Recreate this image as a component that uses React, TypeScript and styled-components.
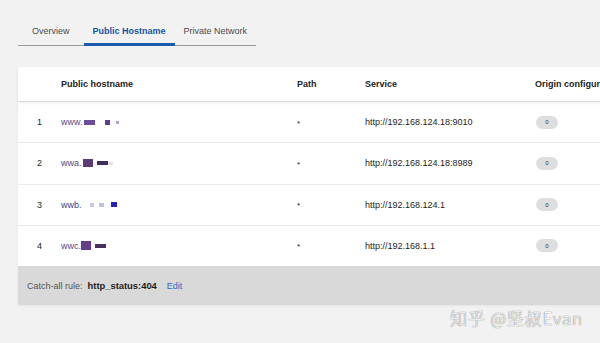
import React from "react";
import styled, { createGlobalStyle } from "styled-components";

const GlobalStyle = createGlobalStyle`
  html, body {
    margin: 0;
    padding: 0;
    background: #f2f2f2;
    overflow: hidden;
  }
  body {
    font-family: "Liberation Sans", Arial, sans-serif;
    color: #1d1d1d;
  }
`;

const Page = styled.div`
  position: relative;
  width: 600px;
  height: 343px;
  padding: 18px 0 0 18px;
  box-sizing: border-box;
`;

const Tabs = styled.nav`
  display: flex;
  width: 238px;
  height: 27px;
  border-bottom: 1px solid #9a9a9a;
`;

const Tab = styled.div<{ $active?: boolean; $pad: number }>`
  display: flex;
  align-items: center;
  flex-shrink: 0;
  white-space: nowrap;
  padding: 0 ${({ $pad }) => $pad}px;
  margin-bottom: -1px;
  font-size: 9px;
  font-weight: ${({ $active }) => ($active ? 700 : 400)};
  color: ${({ $active }) => ($active ? "#1255a8" : "#4a4a4a")};
  border-bottom: 3px solid ${({ $active }) => ($active ? "#1a5bb0" : "transparent")};
`;

const Card = styled.section`
  margin-top: 21px;
  width: 660px;
  background: #fff;
  box-shadow: 0 1px 2px rgba(0, 0, 0, 0.06);
`;

const Grid = styled.div`
  display: grid;
  grid-template-columns: 43px 236px 68px 170px 1fr;
  align-items: center;
`;

const HeadRow = styled(Grid)`
  height: 34px;
  font-size: 9px;
  font-weight: 700;
  color: #222;
  box-shadow: 0 2px 3px rgba(0, 0, 0, 0.07);
  position: relative;
`;

const Row = styled(Grid)`
  height: 41.25px;
  font-size: 9px;
  border-top: 1px solid #e9e9e9;
  box-sizing: border-box;
  &:first-of-type {
    border-top: none;
  }
`;

const Num = styled.span`
  padding-left: 19px;
  font-size: 9px;
`;

const Host = styled.span<{ $color: string }>`
  display: flex;
  align-items: center;
  color: ${({ $color }) => $color};
`;

const Blot = styled.span<{ $w: number; $h: number; $bg: string; $ml: number }>`
  display: inline-block;
  width: ${({ $w }) => $w}px;
  height: ${({ $h }) => $h}px;
  margin-left: ${({ $ml }) => $ml}px;
  background: ${({ $bg }) => $bg};
  filter: blur(0.4px);
`;

const Star = styled.span`
  font-size: 8px;
  padding-top: 2px;
`;

const Badge = styled.span`
  display: inline-flex;
  align-items: center;
  justify-content: center;
  width: 22px;
  height: 13px;
  border-radius: 7px;
  background: #dedede;
  font-size: 6px;
  color: #333;
  margin-left: 1px;
`;

const Footer = styled.div`
  display: flex;
  align-items: center;
  height: 39px;
  padding-left: 9px;
  background: #d9d9d9;
  font-size: 9px;
  color: #555;
`;

const Rule = styled.b`
  margin-left: 5px;
  font-size: 9.4px;
  color: #1d1d1d;
`;

const EditLink = styled.span`
  margin-left: 10px;
  color: #2f6fc0;
`;

const Watermark = styled.div`
  position: absolute;
  left: 450px;
  top: 305px;
  font-family: "Noto Sans CJK SC", "Liberation Sans", sans-serif;
  font-size: 17px;
  font-weight: 300;
  letter-spacing: 0.9px;
  color: #fafafa;
  text-shadow: 0 0 1px #777, 0 0 1px #888;
`;

type Blob = [number, number, string, number];

const rows: {
  prefix: string;
  color: string;
  blots: Blob[];
  service: string;
}[] = [
  {
    prefix: "www.",
    color: "#5a4685",
    blots: [
      [11, 5, "#6e4d9c", 1],
      [5, 5, "#5b3e8a", 10],
      [3, 3, "#b9a3c8", 6],
    ],
    service: "http://192.168.124.18:9010",
  },
  {
    prefix: "wwa.",
    color: "#5a4685",
    blots: [
      [10, 8, "#5d3a78", 1],
      [11, 4, "#3f2f5a", 4],
      [4, 3, "#e4e0e8", 1],
    ],
    service: "http://192.168.124.18:8989",
  },
  {
    prefix: "wwb.",
    color: "#3b3d8d",
    blots: [
      [4, 4, "#c5c8ea", 8],
      [5, 4, "#b9c3e3", 5],
      [6, 5, "#2222b0", 7],
    ],
    service: "http://192.168.124.1",
  },
  {
    prefix: "wwc.",
    color: "#5a4685",
    blots: [
      [10, 9, "#643d86", 0],
      [11, 4, "#48305f", 4],
    ],
    service: "http://192.168.1.1",
  },
];

export default function App() {
  return (
    <Page>
      <GlobalStyle />
      <Tabs>
        <Tab $pad={14}>Overview</Tab>
        <Tab $pad={9} $active>
          Public Hostname
        </Tab>
        <Tab $pad={9}>Private Network</Tab>
      </Tabs>
      <Card>
        <HeadRow>
          <span />
          <span>Public hostname</span>
          <span>Path</span>
          <span>Service</span>
          <span>Origin configurations</span>
        </HeadRow>
        {rows.map((r, i) => (
          <Row key={r.prefix}>
            <Num>{i + 1}</Num>
            <Host $color={r.color}>
              {r.prefix}
              {r.blots.map(([w, h, bg, ml], j) => (
                <Blot key={j} $w={w} $h={h} $bg={bg} $ml={ml} />
              ))}
            </Host>
            <Star>*</Star>
            <span>{r.service}</span>
            <span>
              <Badge>0</Badge>
            </span>
          </Row>
        ))}
        <Footer>
          Catch-all rule:
          <Rule>http_status:404</Rule>
          <EditLink>Edit</EditLink>
        </Footer>
      </Card>
      <Watermark>知乎 @坚叔Evan</Watermark>
    </Page>
  );
}
